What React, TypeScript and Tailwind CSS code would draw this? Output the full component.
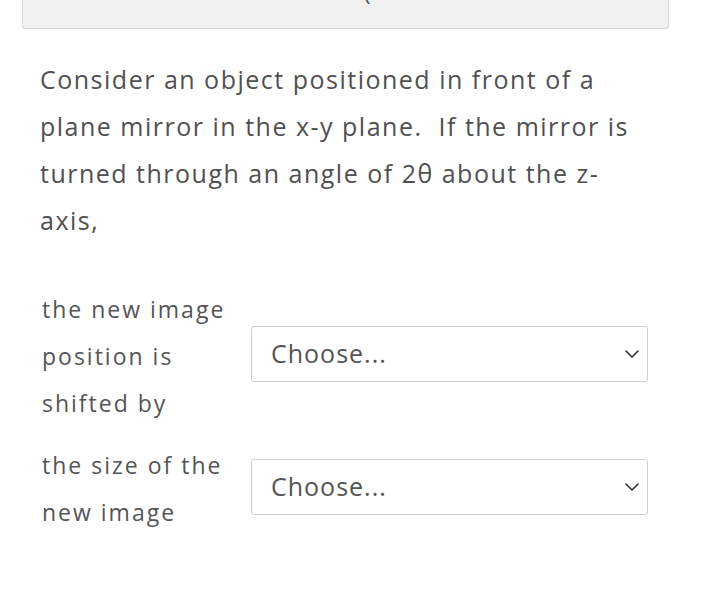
const font = { fontFamily: '"Open Sans", "Liberation Sans", sans-serif' };

function Chevron() {
  return (
    <svg width="16" height="10" viewBox="0 0 16 10" fill="none" className="shrink-0">
      <path d="M2 2l6 6 6-6" stroke="#333" strokeWidth="1.6" strokeLinecap="round" strokeLinejoin="round" />
    </svg>
  );
}

function ChooseBox() {
  return (
    <div className="mb-[5px] flex h-[56px] w-[397px] items-center justify-between rounded-[3px] border border-[#cfcfcf] bg-white pl-[19px] pr-[7px]">
      <span className="text-[25px] tracking-[1px] text-[#545454]">Choose...</span>
      <Chevron />
    </div>
  );
}

function Row({ lines }: { lines: string[] }) {
  return (
    <div className="flex items-center">
      <div className="w-[229px] pl-[20px] text-[23px] leading-[47px] tracking-[2px] text-[#555]">
        {lines.map((l) => (
          <div key={l}>{l}</div>
        ))}
      </div>
      <ChooseBox />
    </div>
  );
}

export default function App() {
  return (
    <div className="min-h-screen bg-white" style={font}>
      <div className="ml-[22px] w-[647px]">
        <div className="relative h-[29px] overflow-hidden rounded-b-[3px] border border-t-0 border-[#d6d6d6] bg-[#f1f1f1]">
          <span className="absolute left-[341px] top-[-22px] text-[22px] leading-[28px] text-[#555]">(</span>
        </div>
        <p className="mt-[27px] w-[618px] pl-[18px] text-[25px] leading-[47px] tracking-[1.5px] text-[#505050]">
          Consider an object positioned in front of a plane mirror in the x-y plane.&nbsp; If the mirror is turned through an angle of 2θ about the z-axis,
        </p>
        <div className="mt-[42px] flex flex-col gap-[15px]">
          <Row lines={["the new image", "position is", "shifted by"]} />
          <Row lines={["the size of the", "new image"]} />
        </div>
      </div>
    </div>
  );
}
